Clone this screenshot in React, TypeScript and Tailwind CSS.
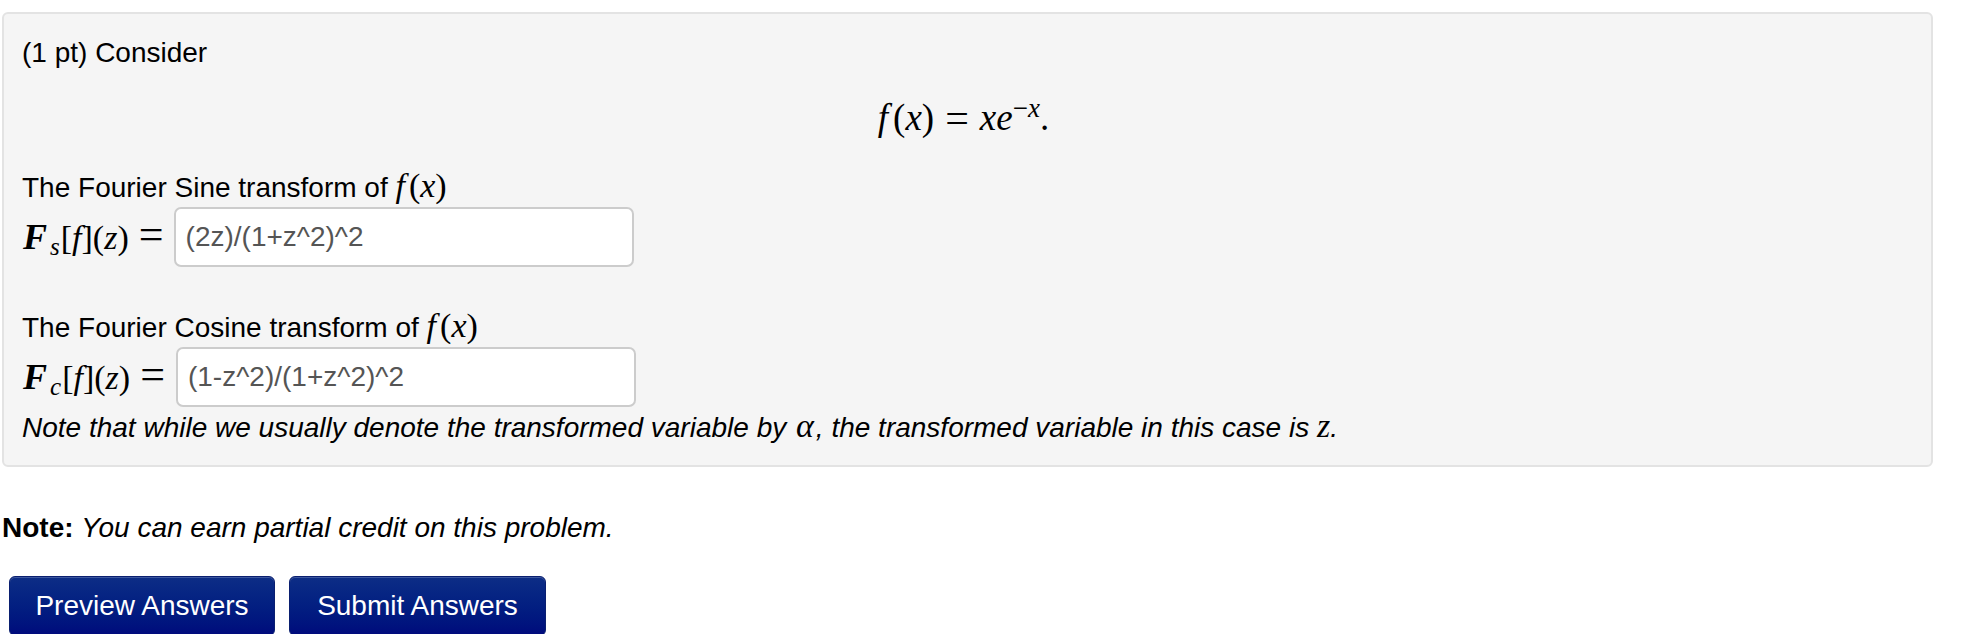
const serif = "font-['Liberation_Serif',serif]";

function Mi({ children }: { children: React.ReactNode }) {
    return <i className={`${serif} italic`}>{children}</i>;
}

function FOfX() {
    return (
        <span className={`${serif} text-[34px] whitespace-nowrap`}>
            <Mi>f</Mi><span className="ml-[4px]">(</span><Mi>x</Mi>)
        </span>
    );
}

function Answer({ sub, value, inputClass }: { sub: string; value: string; inputClass: string }) {
    return (
        <div className="flex items-center h-[60px] mt-[1px]">
            <span className={`${serif} text-[34px] whitespace-nowrap`}>
                <i className="font-bold text-[36px] ml-[1px] mr-[1px]">F</i><span className="text-[25px] italic relative top-[6px] ml-[2px] mr-[1px]">{sub}</span>[<Mi>f</Mi>](<Mi>z</Mi>)<span className="ml-[10px] text-[44px] leading-none">=</span>
            </span>
            <input
                readOnly
                value={value}
                className={`${inputClass} h-[60px] bg-white border-2 border-[#cccccc] rounded-[7px] px-[10px] text-[28px] text-[#555555] outline-none font-['Liberation_Sans',sans-serif]`}
            />
        </div>
    );
}

export default function App() {
    return (
        <div className="w-[1986px] h-[634px] overflow-hidden bg-white text-black font-['Liberation_Sans',sans-serif] text-[28px] leading-[40px]">
            <div className="ml-[2px] mt-[12px] w-[1931px] h-[455px] bg-[#f5f5f5] border-2 border-[#e3e3e3] rounded-[6px] pl-[18px] pt-[19px]">
                <div>(1 pt) Consider</div>
                <div className={`${serif} text-[37px] h-[88px] mt-[1px] mb-[4px] flex items-center justify-center pr-[26px]`}>
                    <Mi>f</Mi><span className="ml-[5px]">(</span><Mi>x</Mi>)<span className="mx-[11px] text-[42px]">=</span><Mi>xe</Mi>
                    <span className="text-[27px] relative -top-[10px]">−<Mi>x</Mi></span>
                    <span>.</span>
                </div>
                <div className="h-[40px]">The Fourier Sine transform of <FOfX /></div>
                <Answer sub="s" value="(2z)/(1+z^2)^2" inputClass="ml-[10px] w-[460px]" />
                <div className="h-[40px] mt-[39px]">The Fourier Cosine transform of <FOfX /></div>
                <Answer sub="c" value="(1-z^2)/(1+z^2)^2" inputClass="ml-[11px] w-[460px]" />
                <div className="italic h-[40px] mt-[1px]">
                    Note that while we usually denote the transformed variable by <span className={`${serif} text-[34px] leading-none mx-[2px]`}>α</span>, the transformed variable in this case is <span className={`${serif} text-[34px] leading-none`}>z</span>.
                </div>
            </div>
            <div className="ml-[2px] mt-[41px]"><b>Note:</b> <i>You can earn partial credit on this problem.</i></div>
            <div className="flex gap-[14px] ml-[9px] mt-[28px]">
                <button className="w-[266px] h-[60px] whitespace-nowrap rounded-[6px] border border-[#0a1f70] bg-gradient-to-b from-[#0d2d86] to-[#000a7c] shadow-[inset_0_1px_0_rgba(255,255,255,0.2)] text-white">Preview Answers</button>
                <button className="w-[257px] h-[60px] whitespace-nowrap rounded-[6px] border border-[#0a1f70] bg-gradient-to-b from-[#0d2d86] to-[#000a7c] shadow-[inset_0_1px_0_rgba(255,255,255,0.2)] text-white">Submit Answers</button>
            </div>
        </div>
    );
}
